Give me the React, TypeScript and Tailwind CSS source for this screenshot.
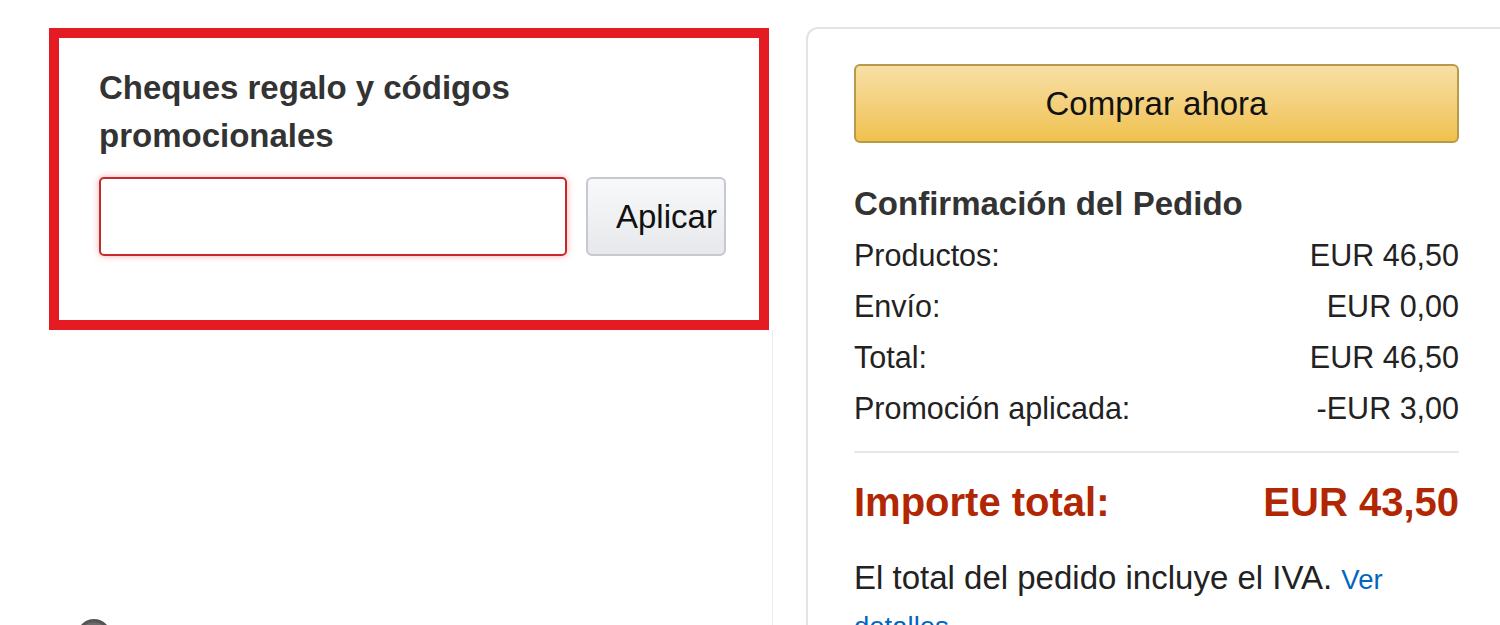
export default function App() {
  const rows = [
    { label: "Productos:", value: "EUR 46,50" },
    { label: "Envío:", value: "EUR 0,00" },
    { label: "Total:", value: "EUR 46,50" },
    { label: "Promoción aplicada:", value: "-EUR 3,00" },
  ];

  return (
    <div className="w-[1500px] h-[625px] overflow-hidden bg-white flex items-start font-['Liberation_Sans',Arial,sans-serif]">
      {/* ── Left column: promo code box ───────────── */}
      <div className="ml-[49px] w-[724px] h-[625px] shrink-0 flex flex-col">
        <div className="mt-[28px] w-[720px] h-[302px] shrink-0 border-[10px] border-[#e41b23] pl-[40px] pt-[26px]">
          <h3 className="text-[33px] leading-[48px] font-bold text-[#333] w-[480px]">
            Cheques regalo y códigos promocionales
          </h3>
          <div className="flex mt-[17px]">
            <input
              type="text"
              className="w-[468px] h-[79px] border-2 border-[#c7282b] rounded-[5px] shadow-[0_0_7px_rgba(228,27,35,0.35)] outline-none px-3 text-[30px]"
            />
            <button className="ml-[19px] w-[140px] h-[79px] border-2 border-[#c6c9ce] rounded-[6px] bg-gradient-to-b from-[#f8f9fa] to-[#e6e8eb] text-left pl-[28px] text-[33px] text-[#111] whitespace-nowrap overflow-visible">
              Aplicar
            </button>
          </div>
        </div>
        <div className="flex-1 min-h-0 border-r border-[#ececec] overflow-hidden">
          <div className="ml-[28px] mt-[289px] w-[34px] h-[34px] rounded-full border-[3px] border-[#555] bg-gradient-to-b from-[#666] to-[#bbb]" />
        </div>
      </div>

      {/* ── Right column: order summary card ──────── */}
      <div className="ml-[33px] mt-[27px] w-[702px] h-[700px] shrink-0 border-2 border-[#e3e3e3] rounded-tl-[12px] pl-[46px] pr-[46px] pt-[35px] text-[#111]">
        <button className="w-[605px] h-[79px] rounded-[6px] border-2 border-[#b89a4a] bg-gradient-to-b from-[#f7dfa5] to-[#f0c14b] text-[33px] text-[#111]">
          Comprar ahora
        </button>

        <h3 className="mt-[37px] text-[33px] leading-[48px] font-bold text-[#333]">
          Confirmación del Pedido
        </h3>

        <div className="w-[605px] mt-[2px]">
          {rows.map((r) => (
            <div key={r.label} className="flex justify-between text-[30.5px] leading-[51px] text-[#222]">
              <span>{r.label}</span>
              <span>{r.value}</span>
            </div>
          ))}
        </div>

        <div className="w-[605px] h-[2px] bg-[#e7e7e7] mt-[17px]" />

        <div className="w-[605px] mt-[21px] flex justify-between text-[40px] leading-[56px] font-bold text-[#b12704]">
          <span>Importe total:</span>
          <span>EUR 43,50</span>
        </div>

        <p className="w-[605px] mt-[25px] text-[33px] leading-[45px] text-[#222]">
          El total del pedido incluye el IVA.{" "}
          <a href="#" className="text-[27.5px] text-[#0066c0]">
            Ver detalles
          </a>
        </p>
      </div>
    </div>
  );
}
